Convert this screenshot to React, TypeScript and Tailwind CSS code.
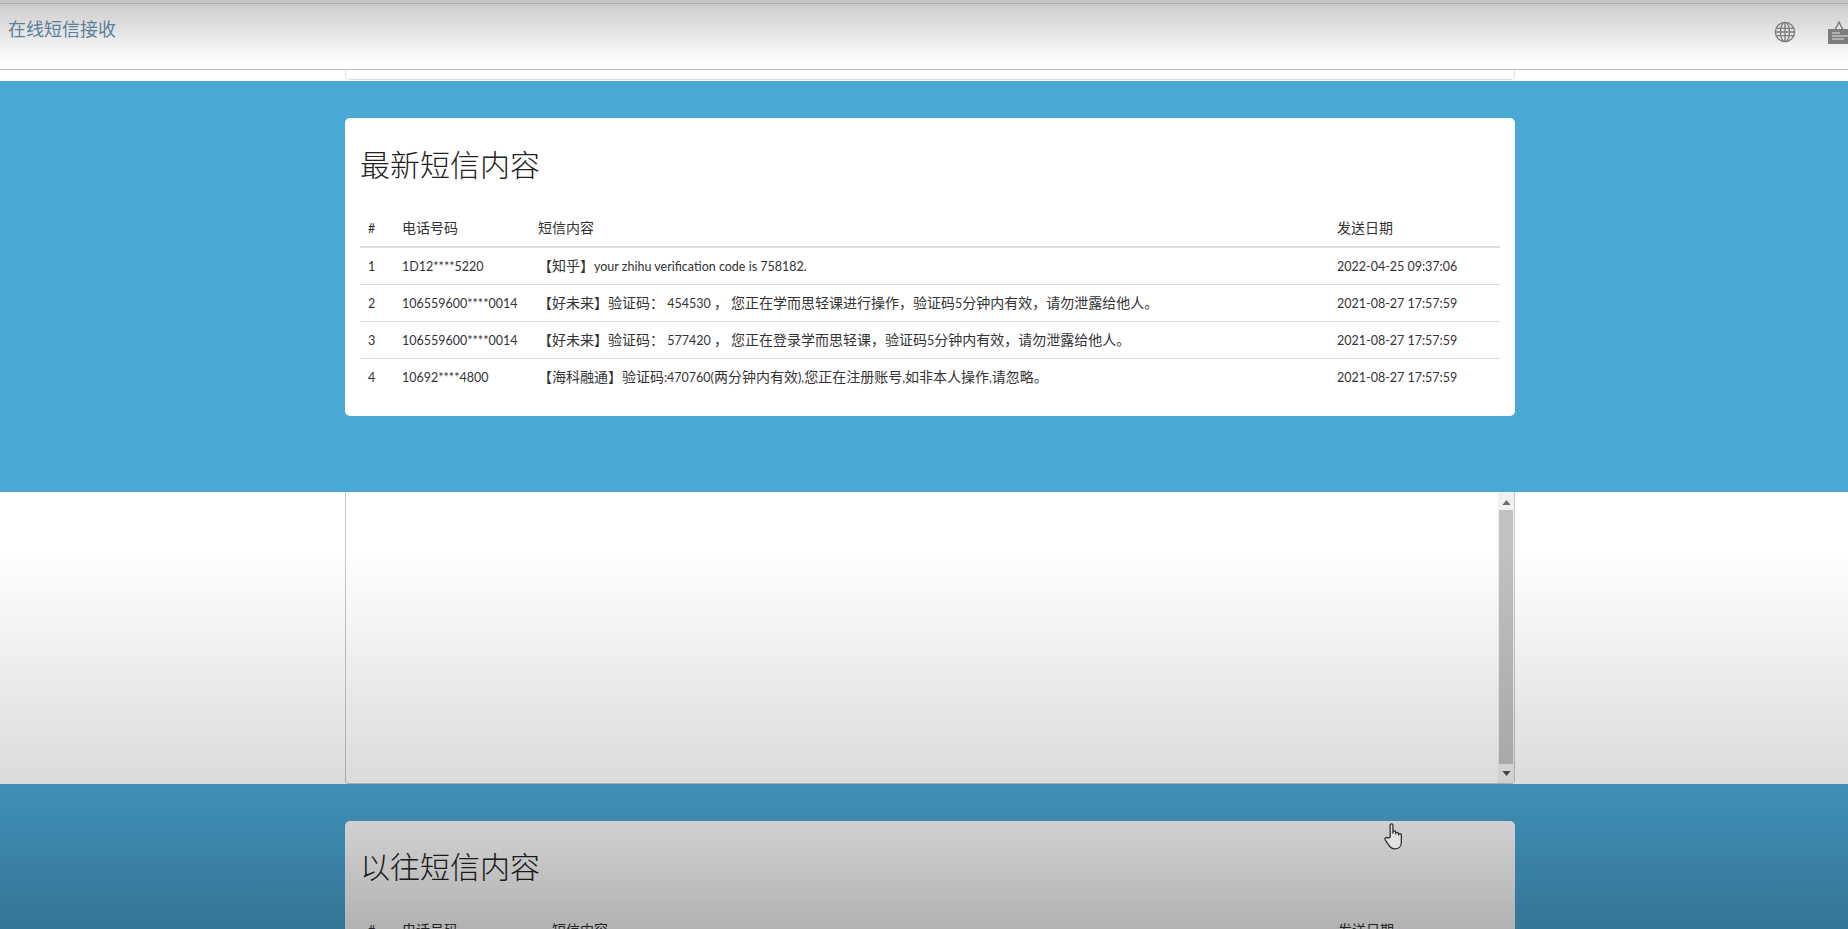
const rows = [
  ["1", "1D12****5220", "【知乎】your zhihu verification code is 758182.", "2022-04-25 09:37:06"],
  ["2", "106559600****0014", "【好未来】验证码： 454530 ， 您正在学而思轻课进行操作，验证码5分钟内有效，请勿泄露给他人。", "2021-08-27 17:57:59"],
  ["3", "106559600****0014", "【好未来】验证码： 577420 ， 您正在登录学而思轻课，验证码5分钟内有效，请勿泄露给他人。", "2021-08-27 17:57:59"],
  ["4", "10692****4800", "【海科融通】验证码:470760(两分钟内有效),您正在注册账号,如非本人操作,请忽略。", "2021-08-27 17:57:59"],
];

// latin runs are set smaller so Lato takes the width the reference's narrow face has
function Mixed({ text }: { text: string }) {
  return (
    <>
      {text.split(/([\x20-\x7e]+)/).map((part, i) =>
        i % 2 === 1 ? (
          <span key={i} className="text-[12.5px] leading-none">{part}</span>
        ) : (
          part
        ),
      )}
    </>
  );
}

function Head() {
  return (
    <thead>
      <tr className="border-b-2 border-[#ddd] text-left">
        <th className="p-2 font-normal"><Mixed text="#" /></th>
        <th className="p-2 font-normal">电话号码</th>
        <th className="p-2 font-normal">短信内容</th>
        <th className="p-2 font-normal">发送日期</th>
      </tr>
    </thead>
  );
}

function Globe() {
  return (
    <svg viewBox="0 0 24 24" className="w-[22px] h-[22px] -mt-[2px]" fill="none" stroke="#7d7d7d" strokeWidth="1.5">
      <circle cx="12" cy="12" r="10.5" />
      <ellipse cx="12" cy="12" rx="5" ry="10.5" />
      <path d="M12 1.5v21M2.5 8h19M2.5 16h19M1.5 12h21" />
    </svg>
  );
}

function Notice() {
  return (
    <svg viewBox="0 0 22 24" className="w-[22px] h-[24px] shrink-0">
      <path d="M11 1 7 9h8z" fill="none" stroke="#7d7d7d" strokeWidth="1.5" />
      <rect x="0" y="8" width="22" height="15" fill="#7d7d7d" />
      <path d="M4 12h8M4 15h17M4 18h12" stroke="#e4e4e4" strokeWidth="1.2" />
    </svg>
  );
}

export default function App() {
  return (
    <div className="relative h-[929px] w-full overflow-hidden bg-white text-[14px] leading-5 text-[#333] font-['Lato','Noto_Sans_CJK_SC',sans-serif]">
      {/* header */}
      <header className="h-[70px] bg-[linear-gradient(to_bottom,#c4c4c4_0,#c9c9c9_5px,#d0d0d0_8px,#fbfbfb_58px,#fff_68px)] border-b border-[#bdbdbd]">
        <div className="h-[4px] border-b border-[#adadad] bg-[#c6c6c6]" />
        <div className="flex items-start justify-between pt-[15px] pl-2">
          <a className="text-[18px] leading-5 text-[#5a7f9b]">在线短信接收</a>
          <div className="flex items-center gap-[32px] pt-[2px] -mr-[2px]">
            <Globe />
            <Notice />
          </div>
        </div>
      </header>
      <div className="h-[11px] pl-[12px]">
        <div className="mx-auto h-[10px] w-[1170px] rounded-b-[5px] border border-t-0 border-[#ddd]" />
      </div>

      {/* latest */}
      <section className="h-[411px] bg-[#4aa8d5] pt-[37px] pl-[12px]">
        <div className="mx-auto h-[298px] w-[1170px] rounded-[5px] bg-white px-[15px] pt-[30px]">
          <h2 className="mb-[29px] text-[30px] leading-[33px] font-light text-[#222]">最新短信内容</h2>
          <table className="w-full table-fixed border-collapse">
            <colgroup>
              <col className="w-[34px]" />
              <col className="w-[136px]" />
              <col className="w-[799px]" />
              <col />
            </colgroup>
            <Head />
            <tbody>
              {rows.map((r, i) => (
                <tr key={r[0]} className={i < rows.length - 1 ? "border-b border-[#ddd]" : ""}>
                  {r.map((c, j) => (
                    <td key={j} className="whitespace-nowrap p-2"><Mixed text={c} /></td>
                  ))}
                </tr>
              ))}
            </tbody>
          </table>
        </div>
      </section>

      {/* frame with scrollbar */}
      <section className="h-[292px] bg-white pl-[12px]">
        <div className="mx-auto flex h-full w-[1170px] justify-end rounded-b-[4px] border-x border-b border-[#c8c8c8]">
          <div className="flex h-full w-[16px] flex-col items-center bg-[#f1f1f1]">
            <svg viewBox="0 0 10 6" className="mt-[8px] w-[9px] h-[5px]"><path d="M5 0 10 6H0z" fill="#707070" /></svg>
            <div className="mt-[5px] h-[254px] w-[14px] bg-[#c1c1c1]" />
            <svg viewBox="0 0 10 6" className="mt-[7px] w-[9px] h-[5px]"><path d="M5 6 10 0H0z" fill="#505050" /></svg>
          </div>
        </div>
      </section>

      {/* history */}
      <section className="h-[300px] bg-[#4aa8d5] pt-[37px] pl-[12px]">
        <div className="mx-auto h-[297px] w-[1170px] rounded-[5px] bg-white px-[15px] pt-[29px]">
          <h2 className="mb-[29px] text-[30px] leading-[33px] font-light text-[#222]">以往短信内容</h2>
          <table className="w-full table-fixed border-collapse">
            <colgroup>
              <col className="w-[34px]" />
              <col className="w-[150px]" />
              <col className="w-[786px]" />
              <col />
            </colgroup>
            <Head />
          </table>
        </div>
      </section>

      {/* video player shade */}
      <div className="pointer-events-none absolute inset-x-0 bottom-0 h-[380px] bg-[linear-gradient(to_bottom,rgba(0,0,0,0)_0,rgba(0,0,0,0.14)_235px,rgba(0,0,0,0.3)_380px)]" />

      {/* cursor */}
      <svg viewBox="0 0 20 26" className="absolute left-[1384px] top-[822px] w-[22px] h-[28px]" fill="#e2e2e2" stroke="#2f2f2f" strokeWidth="1.2" strokeLinejoin="round">
        <path d="M5.5 14V3a1.3 1.3 0 0 1 2.6 0v7.500V9.500a1.300 1.300 0 0 1 2.600 0v1.500a1.300 1.300 0 0 1 2.600 0v1a1.300 1.300 0 0 1 2.600 0V19c0 3.500-2.500 6-6 6-3 0-4.500-1.500-6-4l-3-4.500c-.8-1.500 1-2.800 2.200-1.500z" />
      </svg>
    </div>
  );
}
